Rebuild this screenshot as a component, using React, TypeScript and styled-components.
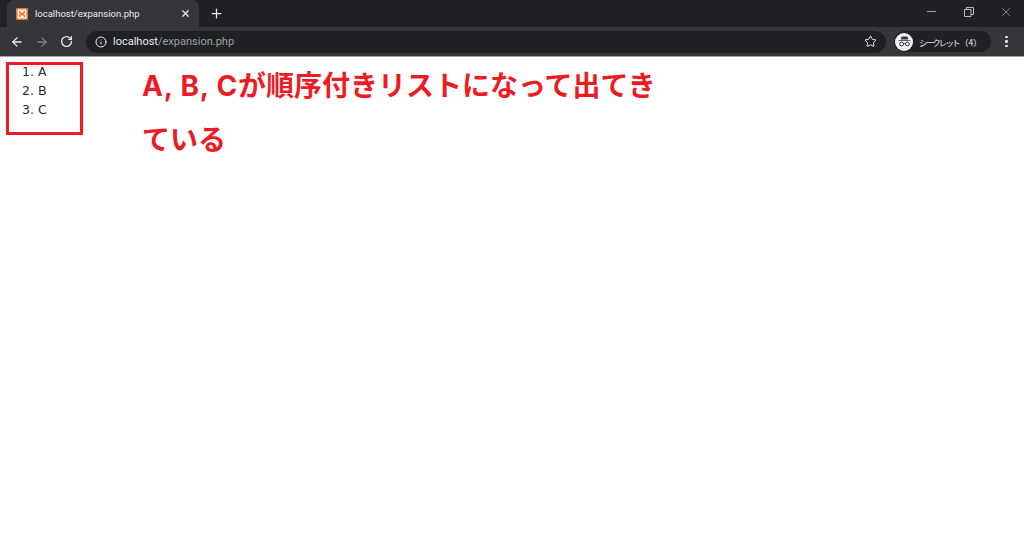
import styled, { createGlobalStyle } from "styled-components"
import { ArrowLeft, ArrowRight, Info, Plus, RotateCw, Star, X } from "lucide-react"

const GlobalStyle = createGlobalStyle`
  html, body {
    margin: 0;
    padding: 0;
    background: #fff;
  }
  body {
    font-family: Roboto, "Noto Sans CJK JP", sans-serif;
  }
`

export default function App() {
  return (
    <Page>
      <GlobalStyle />
      <TitleBar>
        <Tab>
          <Favicon viewBox="0 0 12 12">
            <rect width="12" height="12" rx="1" fill="#e8782a" />
            <path
              d="M2.2 2.2h2.9v1.6h1.8V2.2h2.9v3L8.7 6l1.1.8v3H6.9V8.2H5.1v1.6H2.2v-3L3.3 6 2.2 5.2z"
              fill="none"
              stroke="#fff"
              strokeWidth="1.3"
            />
          </Favicon>
          <TabTitle>localhost/expansion.php</TabTitle>
          <X size={11} strokeWidth={2.6} color="#e8eaed" />
        </Tab>
        <NewTab>
          <Plus size={15} strokeWidth={2} color="#e8eaed" />
        </NewTab>
        <WindowControls>
          <WindowButton>
            <MinimizeBar />
          </WindowButton>
          <WindowButton>
            <RestoreIcon viewBox="0 0 10 10">
              <path d="M.5 2.5h6.5v7H.5zM2.5 2.5V.5h7v7H7" fill="none" stroke="#b4b7bb" strokeWidth="1" />
            </RestoreIcon>
          </WindowButton>
          <WindowButton>
            <X size={14} strokeWidth={1} color="#c4c6c9" />
          </WindowButton>
        </WindowControls>
      </TitleBar>
      <Toolbar>
        <NavButtons>
          <ArrowLeft size={14} strokeWidth={2.2} color="#e8eaed" />
          <ArrowRight size={14} strokeWidth={2.2} color="#7d8083" />
          <RotateCw size={13} strokeWidth={2.4} color="#e8eaed" />
        </NavButtons>
        <Omnibox>
          <Info size={12} strokeWidth={2} color="#e8eaed" />
          <Url>
            <Host>localhost</Host>/expansion.php
          </Url>
          <Star size={13} strokeWidth={1.8} color="#e8eaed" />
        </Omnibox>
        <IncognitoChip>
          <IncognitoBadge>
            <svg width="13" height="11" viewBox="0 0 13 11">
              <path d="M3.6 0.5h5.8l.9 3H2.7zM0.5 3.9h12v.9H0.5z" fill="#35363a" />
              <circle cx="3.6" cy="8" r="1.9" fill="none" stroke="#35363a" strokeWidth="1" />
              <circle cx="9.4" cy="8" r="1.9" fill="none" stroke="#35363a" strokeWidth="1" />
              <path d="M5.5 7.6h2" stroke="#35363a" strokeWidth=".8" />
            </svg>
          </IncognitoBadge>
          <ChipLabel>シークレット</ChipLabel>
          <ChipCount>（4）</ChipCount>
        </IncognitoChip>
        <MenuDots>
          <span />
          <span />
          <span />
        </MenuDots>
      </Toolbar>
      <Content>
        <NumberedList>
          <li>A</li>
          <li>B</li>
          <li>C</li>
        </NumberedList>
        <Highlight />
        <Note>
          <NoteLine>
            <NoteLatin>A, B, C</NoteLatin>
            <span>が順序付きリストになって出てき</span>
          </NoteLine>
          <NoteLine>ている</NoteLine>
        </Note>
      </Content>
    </Page>
  )
}

const Page = styled.div`
  width: 1024px;
  height: 544px;
  overflow: hidden;
  display: flex;
  flex-direction: column;
`

const TitleBar = styled.div`
  height: 27px;
  flex: none;
  background: #202124;
  display: flex;
  align-items: flex-end;
  padding-left: 7px;
`

const Tab = styled.div`
  width: 192px;
  height: 27px;
  box-sizing: border-box;
  background: #35363a;
  border-radius: 7px 7px 0 0;
  padding: 0 8px 0 9px;
  display: flex;
  align-items: center;
`

const Favicon = styled.svg`
  width: 12px;
  height: 12px;
  flex: none;
  margin-right: 7px;
`

const TabTitle = styled.span`
  flex: 1;
  font-size: 9.5px;
  color: #e8eaed;
  white-space: nowrap;
`

const NewTab = styled.div`
  width: 34px;
  height: 27px;
  display: flex;
  align-items: center;
  justify-content: center;
`

const WindowControls = styled.div`
  margin-left: auto;
  height: 27px;
  display: flex;
`

const WindowButton = styled.div`
  width: 37px;
  height: 23px;
  display: flex;
  align-items: center;
  justify-content: center;
`

const MinimizeBar = styled.div`
  width: 9px;
  height: 1px;
  background: #9aa0a6;
`

const RestoreIcon = styled.svg`
  width: 10px;
  height: 10px;
`

const Toolbar = styled.div`
  height: 29px;
  flex: none;
  background: #35363a;
  border-bottom: 1px solid #a4a5a7;
  display: flex;
  align-items: center;
  padding-left: 10px;
`

const NavButtons = styled.div`
  width: 66px;
  display: flex;
  gap: 11px;
  align-items: center;
`

const Omnibox = styled.div`
  width: 800px;
  height: 22px;
  margin-left: 10px;
  box-sizing: border-box;
  background: #202124;
  border-radius: 11px;
  padding: 0 9px;
  display: flex;
  align-items: center;
`

const Url = styled.span`
  flex: 1;
  margin-left: 6px;
  font-size: 11px;
  color: #9aa0a6;
`

const Host = styled.span`
  color: #e8eaed;
`

const IncognitoChip = styled.div`
  width: 97px;
  height: 21px;
  margin-left: 8px;
  box-sizing: border-box;
  background: #202124;
  border-radius: 10px;
  padding-left: 1px;
  display: flex;
  align-items: center;
`

const IncognitoBadge = styled.div`
  width: 18px;
  height: 18px;
  border-radius: 50%;
  background: #f1f3f4;
  display: flex;
  align-items: center;
  justify-content: center;
`

const ChipLabel = styled.span`
  width: 41px;
  margin-left: 6px;
  font-family: "Noto Sans CJK JP", sans-serif;
  font-size: 8.5px;
  letter-spacing: -1.9px;
  color: #e8eaed;
  white-space: nowrap;
`

const ChipCount = styled.span`
  font-family: "Noto Sans CJK JP", sans-serif;
  font-size: 8.5px;
  color: #e8eaed;
  white-space: nowrap;
`

const MenuDots = styled.div`
  margin-left: 14px;
  display: flex;
  flex-direction: column;
  gap: 2px;

  span {
    width: 2.5px;
    height: 2.5px;
    border-radius: 50%;
    background: #e8eaed;
  }
`

const Content = styled.main`
  position: relative;
  flex: 1;
  background: #fff;
`

const NumberedList = styled.ol`
  margin: 5px 0 0;
  padding-left: 38px;
  font-family: "DejaVu Sans", sans-serif;
  font-size: 12.5px;
  line-height: 19px;
  color: #2a2a2a;
`

const Highlight = styled.div`
  position: absolute;
  left: 6px;
  top: 5px;
  width: 77px;
  height: 73px;
  box-sizing: border-box;
  border: 3px solid #ed1c24;
`

const Note = styled.div`
  position: absolute;
  left: 142px;
  top: 0;
  font-family: "Noto Sans CJK JP", sans-serif;
  font-size: 28px;
  font-weight: 700;
  color: #ed1c24;
`

const NoteLine = styled.div`
  height: 54px;
  line-height: 54px;
  white-space: nowrap;
`

const NoteLatin = styled.span`
  font-family: Inter, "Noto Sans CJK JP", sans-serif;
  line-height: 1;
  letter-spacing: 0.8px;
`
